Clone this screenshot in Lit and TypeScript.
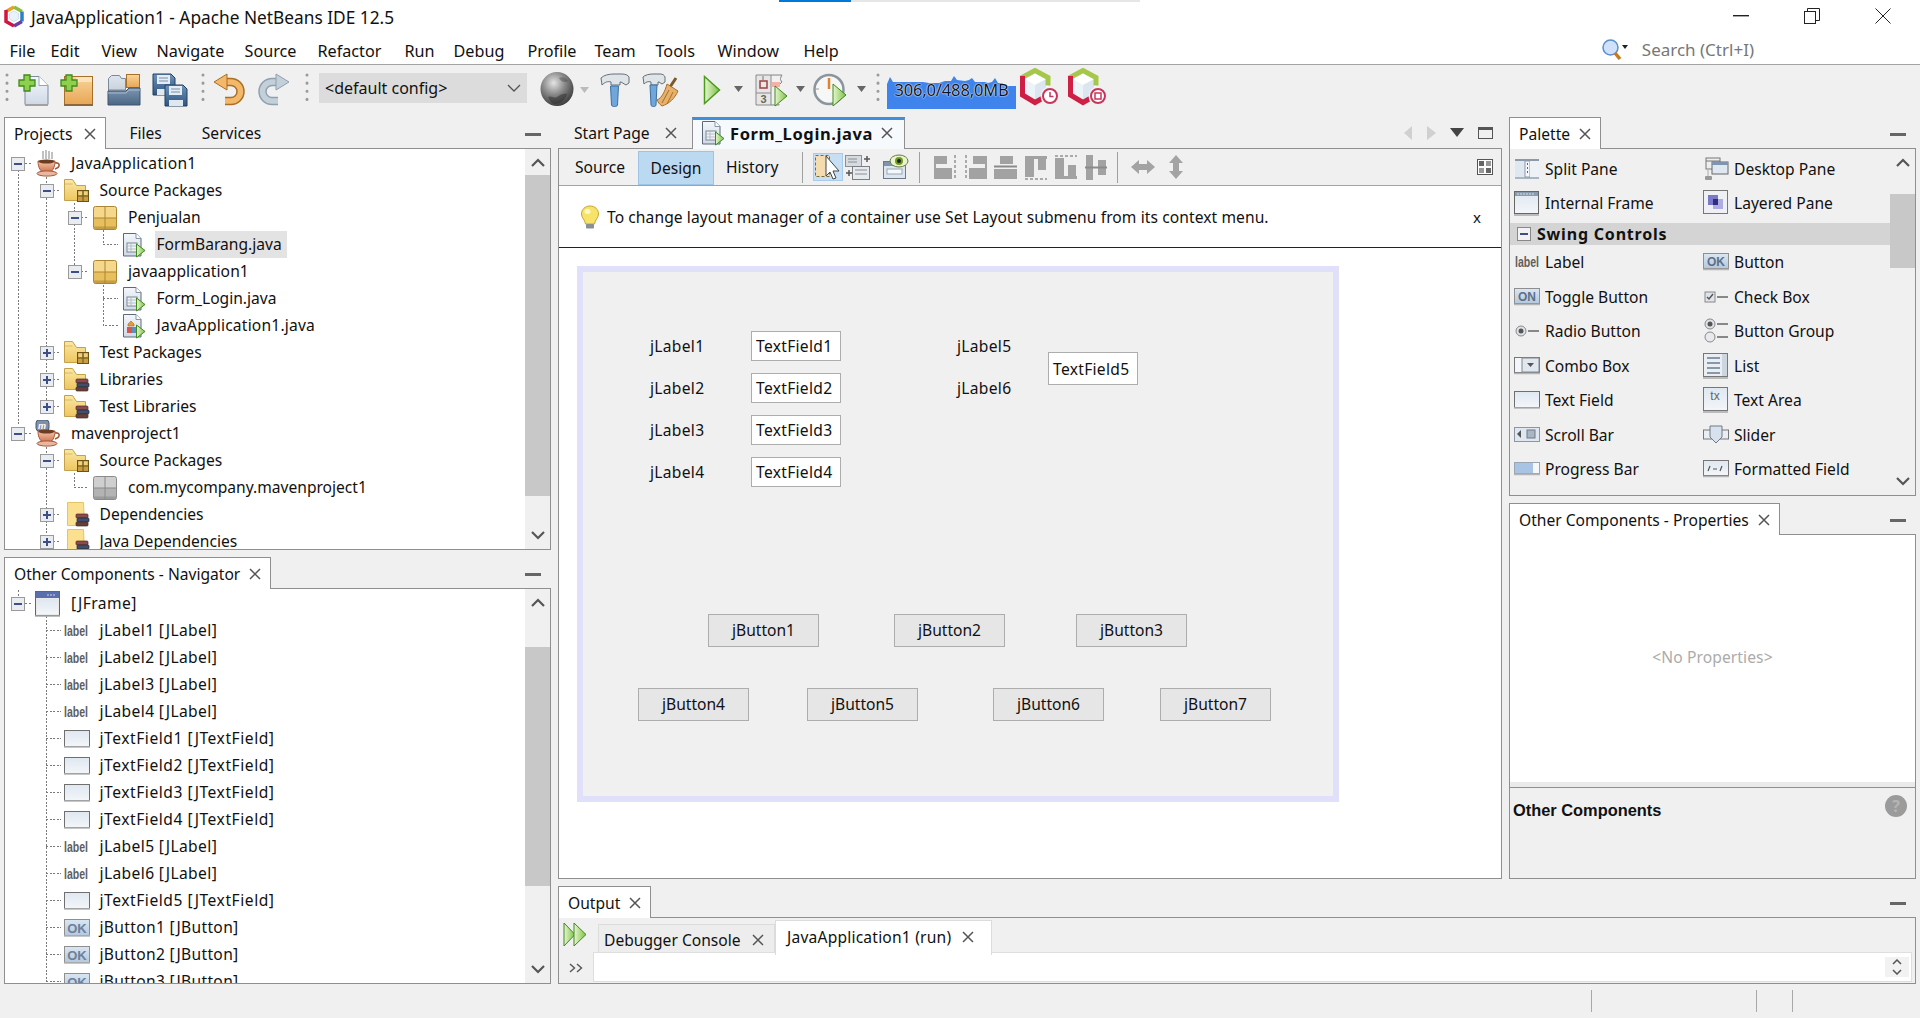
import { LitElement, html, css, svg } from "lit";
import { customElement } from "lit/decorators.js";

const I = (w: number, h: number, body: unknown) =>
  html`<svg width=${w} height=${h} viewBox="0 0 ${w} ${h}">${body}</svg>`;

const DEFS = svg`
<linearGradient id="gFold" x1="0" y1="0" x2="0" y2="1"><stop offset="0" stop-color="#fbe7a4"/><stop offset="1" stop-color="#eec65f"/></linearGradient>
<linearGradient id="gOrange" x1="0" y1="0" x2="0" y2="1"><stop offset="0" stop-color="#f9d49a"/><stop offset="1" stop-color="#e8a655"/></linearGradient>
<linearGradient id="gGreen" x1="0" y1="0" x2="1" y2="0"><stop offset="0" stop-color="#e6f5d0"/><stop offset="1" stop-color="#7cc242"/></linearGradient>
<linearGradient id="gDoc" x1="0" y1="0" x2="0" y2="1"><stop offset="0" stop-color="#f4f7fb"/><stop offset="1" stop-color="#cfd9e6"/></linearGradient>
<linearGradient id="gField" x1="0" y1="0" x2="0" y2="1"><stop offset="0" stop-color="#dfe7f0"/><stop offset="1" stop-color="#f3f6fa"/></linearGradient>
<linearGradient id="gBtn" x1="0" y1="0" x2="0" y2="1"><stop offset="0" stop-color="#dbe6f2"/><stop offset="1" stop-color="#b4c8dd"/></linearGradient>
<linearGradient id="gCup" x1="0" y1="0" x2="0" y2="1"><stop offset="0" stop-color="#f2c9ae"/><stop offset="1" stop-color="#cf6b45"/></linearGradient>
<linearGradient id="gBlue" x1="0" y1="0" x2="0" y2="1"><stop offset="0" stop-color="#6d93bd"/><stop offset="1" stop-color="#2f5580"/></linearGradient>
<linearGradient id="gGrey" x1="0" y1="0" x2="0" y2="1"><stop offset="0" stop-color="#dde4ec"/><stop offset="1" stop-color="#b8c4d0"/></linearGradient>
<linearGradient id="gFront" x1="0" y1="0" x2="0" y2="1"><stop offset="0" stop-color="#7d97b2"/><stop offset="1" stop-color="#4a6784"/></linearGradient>
<radialGradient id="gGlobe" cx="0.4" cy="0.32" r="0.72"><stop offset="0" stop-color="#e4e4e4"/><stop offset="0.5" stop-color="#858585"/><stop offset="1" stop-color="#383838"/></radialGradient>
`;

/* ---------- tree icons ---------- */
const cup = (maven = false) => I(30, 27, svg`
  ${maven
    ? svg`<rect x="3" y="0" width="13" height="11" rx="3" fill="#7f8fa8" stroke="#4d5a70"/><text x="5" y="9" font-family="Liberation Sans" font-size="9" font-weight="700" font-style="italic" fill="#fff">m</text>`
    : svg`<path d="M10 1v8M13 0v9M16 1v8M19 2v7" stroke="#999" stroke-width="1.2"/>`}
  <path d="M5 11h17c0 7-3 12-8.500 12S5 18 5 11z" fill="url(#gCup)" stroke="#a5583a"/>
  <path d="M22 13c5-1 6 4 0 6" fill="none" stroke="#a5583a" stroke-width="1.6"/>
  <ellipse cx="14" cy="23.500" rx="10" ry="2.600" fill="#e9b79f" stroke="#a5583a"/>
  <ellipse cx="13.500" cy="11.500" rx="8" ry="2" fill="#6b3d22"/>`);

const pkgSmall = svg`<rect x="13.500" y="12.500" width="11" height="11" fill="#c99f45" stroke="#6d5416"/><path d="M19 12.500v11M13.500 18h11" stroke="#6d5416"/><rect x="14.500" y="13.500" width="3.500" height="3.500" fill="#ecd283"/><rect x="20" y="13.500" width="3.500" height="3.500" fill="#ecd283"/>`;
const books = svg`<rect x="12" y="12" width="12" height="4" rx="1" fill="#8d4a4a" stroke="#4d2a2a" stroke-width=".7"/><rect x="13" y="16" width="12" height="4" rx="1" fill="#3e4f6d" stroke="#1f2a40" stroke-width=".7"/><rect x="12" y="20" width="12" height="4" rx="1" fill="#6b3b3b" stroke="#332" stroke-width=".7"/>`;
const folder = (inner: unknown) => I(26, 25, svg`<path d="M.5 1.500h8l4 6h9v15H.5z" fill="url(#gFold)" stroke="#c4a24c"/><path d="M.5 6h8" stroke="#c4a24c" stroke-width=".6"/>${inner}`);
const plainDep = () => I(26, 25, svg`<path d="M3.500.5h16l1 23H3.500z" fill="#fbe08f" stroke="#e2c568"/>${books}`);
const pkgIc = (gray = false) => {
  const f = gray ? "#cfcfcf" : "#f5d88c", d = gray ? "#8a8a8a" : "#ab8734", m = gray ? "#b3b3b3" : "#e8bf5d";
  return I(24, 24, svg`<rect x=".5" y=".5" width="23" height="23" rx="2" fill=${f} stroke=${d}/><rect x="1" y="12" width="22" height="11" fill=${m}/><path d="M12 .5v23M.5 12h23" stroke=${d}/><rect x="1" y="20.500" width="22" height="3" fill=${d} opacity=".6"/>`);
};
const tri = svg`<path d="M14.500 12 23 18.500 14.500 25z" fill="url(#gGreen)" stroke="#3f8a1c"/>`;
const formFile = () => I(24, 26, svg`<path d="M1.500 1.500H14l5 5v17.500H1.500z" fill="url(#gDoc)" stroke="#5c6a78"/><path d="M14 1.500v5h5" fill="#fff" stroke="#8796a5"/><rect x="5" y="11" width="10" height="9" fill="#eef2f6" stroke="#7a8794"/><path d="M5 14h10M5 17h10M9 11v9" stroke="#a9b4c0" stroke-width=".8"/>${tri}`);
const javaFile = () => I(24, 26, svg`<path d="M1.500 1.500H14l5 5v17.500H1.500z" fill="url(#gDoc)" stroke="#5c6a78"/><path d="M14 1.500v5h5" fill="#fff" stroke="#8796a5"/><path d="M9 8l3 3v2H6v-2z" fill="#e59a3a" stroke="#a86a1c" stroke-width=".6"/><rect x="5" y="14" width="5" height="6" fill="#d9534f"/><rect x="10" y="14" width="4" height="6" fill="#5b8fc7"/>${tri}`);
const labelIc = () => I(25, 18, svg`<text x="0" y="14" font-family="Liberation Sans" font-size="15" font-weight="700" textLength="24" lengthAdjust="spacingAndGlyphs" fill="#5e5e5e">label</text>`);
const tfIc = () => I(26, 18, svg`<rect x=".5" y=".5" width="25" height="16" fill="url(#gField)" stroke="#6f6f6f"/><path d="M0 17h26" stroke="#b5b5b5" stroke-width="1.500"/>`);
const okIc = () => I(26, 18, svg`<rect x=".5" y=".5" width="25" height="16" fill="url(#gBtn)" stroke="#8f8f8f"/><text x="13" y="13.500" text-anchor="middle" font-family="Liberation Sans" font-size="13" font-weight="700" fill="#6d8099">OK</text><path d="M0 17h26" stroke="#b5b5b5" stroke-width="1.500"/>`);
const frameIc = () => I(26, 26, svg`<rect x=".5" y=".5" width="24" height="24" fill="#eaeaea" stroke="#666"/><rect x="1" y="1" width="23" height="6" fill="#5a6fae"/><path d="M12 4h2M15 4h2M18 4h2" stroke="#cfd6ee"/><rect x="2" y="8" width="21" height="15" fill="url(#gField)"/><path d="M0 25h25" stroke="#aaa" stroke-width="1.500"/>`);

/* ---------- toolbar icons ---------- */
const plus = svg`<path d="M6 1h6v5h5v6h-5v5H6v-5H1V6h5z" fill="#8ed04e" stroke="#3f8a1c" stroke-width="1.300"/>`;
const newFile = () => I(32, 32, svg`<path d="M7 2.500h14l9 9v19H7z" fill="url(#gDoc)" stroke="#7b8b9b"/><path d="M21 2.500v9h9" fill="#fff" stroke="#98a6b3"/><path d="M7 31h23" stroke="#a1a1a1" stroke-width="2"/>${plus}`);
const newProj = () => I(34, 32, svg`<rect x="4.500" y="2.500" width="28" height="28" fill="url(#gOrange)" stroke="#a5702a"/><path d="M4 31h29" stroke="#8a6a3a" stroke-width="2"/><path d="M16 3h16v5H16z" fill="#fbe4bd"/>${plus}`);
const openProj = () => I(34, 33, svg`<path d="M1.500 31V5.500l3-3h8l2 3h4V17h-17z" fill="url(#gGrey)" stroke="#7a8a9a"/><rect x="19.500" y="1.500" width="13" height="13" fill="url(#gOrange)" stroke="#a5702a"/><path d="M1 32V18h18l3-3h11v17z" fill="url(#gFront)" stroke="#3d5570"/><path d="M1 20h18l3-3h11" stroke="#a8bacb" fill="none"/>`);
const floppy = (x: number, y: number) => svg`<path d="M${x} ${y}h18l4 4v17H${x}z" fill="url(#gBlue)" stroke="#21405f"/><rect x=${x + 4} y=${y + 1} width="13" height="9" fill="#e4ecf5"/><path d="M${x + 6} ${y + 4}h9M${x + 6} ${y + 7}h9" stroke="#7a8ea3"/><rect x=${x + 4} y=${y + 15} width="14" height="6" fill="#dfe7f0"/>`;
const saveAll = () => I(36, 34, svg`${floppy(1, 1)}${floppy(13, 12)}`);
const undo = () => I(34, 36, svg`<path d="M11 11h8a9.500 9.500 0 0 1 0 19h-6" fill="none" stroke="#a96f26" stroke-width="8.500"/><path d="M11 11h8a9.500 9.500 0 0 1 0 19h-6" fill="none" stroke="#f3b869" stroke-width="5.500"/><path d="M15 3 2 11l13 8z" fill="#f3b869" stroke="#a96f26"/>`);
const redo = () => I(34, 36, svg`<path d="M23 11h-8a9.500 9.500 0 0 0 0 19h6" fill="none" stroke="#8fa0ae" stroke-width="8.500"/><path d="M23 11h-8a9.500 9.500 0 0 0 0 19h6" fill="none" stroke="#c3d0da" stroke-width="5.500"/><path d="M19 3l13 8-13 8z" fill="#c3d0da" stroke="#8fa0ae"/>`);
const globe = () => I(34, 36, svg`<ellipse cx="17" cy="18" rx="16.500" ry="17" fill="url(#gGlobe)"/><path d="M8 26c4-2 6 2 9 0s6-4 10-3c-2 6-6 10-12 10-3 0-5-3-7-7z" fill="#2c2c2c" opacity=".5"/><path d="M19 7c3-2 7 0 9 3-3 2-7 1-9-3z" fill="#444" opacity=".4"/>`);
const arrowD = () => I(10, 6, svg`<path d="M0 0h9l-4.500 6z" fill="#666"/>`);
const hammer = () => I(30, 36, svg`<path d="M1 6c3-3 8-4 13-4h8c3 0 6 1 7 3v6l-3 2-5-3h-1v3h-9v-3C8 9 5 10 2 13z" fill="#dfe4e8" stroke="#666f78"/><path d="M10.500 14h8l-1 19c0 2-6 2-6 0z" fill="#6fa7dc" stroke="#3d6f9e"/>`);
const cleanB = () => I(40, 36, svg`<path d="M1 5c2-2 6-3 10-3h7c3 0 4 1 5 3v5l-3 2-3-2h-1v3h-7v-3C6 9 4 10 2 12z" fill="#dfe4e8" stroke="#666f78"/><path d="M8 13h7l-1 20c0 2-5 2-5 0z" fill="#6fa7dc" stroke="#3d6f9e"/><path d="M34 6l-6 9" stroke="#7a5a2a" stroke-width="3"/><path d="M25 12l11 7c-3 7-9 13-16 15-3-2-4-4-5-6 5-2 8-9 10-16z" fill="#e8b06a" stroke="#a5702a"/><path d="M27 18l-7 13M31 20l-6 12" stroke="#a5702a"/>`);
const runIc = () => I(18, 30, svg`<path d="M1.500 1.500 16.500 15 1.500 28.500z" fill="url(#gGreen)" stroke="#4c9a1e" stroke-width="1.500"/>`);
const debugIc = () => I(34, 34, svg`<path d="M1 2h26l-2 4 2 3-3 3v20H1z" fill="#e6e6e6" stroke="#8a8a8a"/><rect x="16" y="3" width="9" height="28" fill="#f1f1f1"/><path d="M16 2v30M1 20h15" stroke="#8a8a8a"/><rect x="17" y="9" width="8" height="5" fill="#f7b0a8"/><path d="M8 3v4" stroke="#777"/><rect x="5" y="8" width="7" height="7" fill="#e8e8e8" stroke="#a04040" stroke-width="1.500"/><text x="8.500" y="30" text-anchor="middle" font-family="Liberation Sans" font-size="11" font-weight="700" fill="#665">3</text><path d="M20 13l12 10-12 10z" fill="url(#gGreen)" stroke="#3f8a1c"/>`);
const profIc = () => I(36, 34, svg`<circle cx="16" cy="16.500" r="14.500" fill="#f7f7f7" stroke="#8b959e" stroke-width="2.500"/><path d="M16 5v11" stroke="#e0822f" stroke-width="2.500"/><path d="M3 16h3" stroke="#999"/><path d="M20 11l13 11-13 11z" fill="url(#gGreen)" stroke="#3f8a1c"/>`);
const nbHex = (badge: unknown) => I(40, 39, svg`
  <path d="M15 4 3 10v17l12 7 13-7V10z" fill="#fff"/>
  <path d="M15 17 5 11v15l10 6z" fill="#eef3f8"/><path d="M15 17l11-6v15l-11 6z" fill="#dbe6f0"/>
  <path d="M2 12V9.500L15 2.500l13 7v8" stroke="#a6c84a" stroke-width="5" fill="none"/>
  <path d="M2.500 8v19L15 34.500l7-4" stroke="#cf1f45" stroke-width="5" fill="none"/>
  <circle cx="30" cy="28" r="9.500" fill="#f0f0f0"/>${badge}`);
const nbClock = () => nbHex(svg`<circle cx="30" cy="28" r="7" fill="#fff" stroke="#c8355c" stroke-width="2"/><path d="M30 24v4.500h3.500" fill="none" stroke="#c8355c" stroke-width="1.500"/>`);
const nbStop = () => nbHex(svg`<circle cx="30" cy="28" r="7" fill="#fff" stroke="#c8355c" stroke-width="2"/><rect x="27" y="25" width="6" height="6" fill="#fff" stroke="#c8355c" stroke-width="1.500"/>`);
const logo = () => I(22, 26, svg`
  <path d="M11 3 3 7.500" stroke="#e8a020" stroke-width="3.500" fill="none"/>
  <path d="M11 3 19 7.500" stroke="#8cbf3f" stroke-width="3.500" fill="none"/>
  <path d="M19 7.500v10" stroke="#2f7fc8" stroke-width="3.500" fill="none"/>
  <path d="M3 6v11.500L11 22" stroke="#d3143e" stroke-width="3.500" fill="none"/>
  <path d="M11 22l8-4.500" stroke="#6a3fa0" stroke-width="3.500" fill="none"/>
  <path d="M11 7 6.500 9.500v5.500l4.500 2.500 4.500-2.500V9.500z" fill="#e9f2fa" stroke="#cfe0ee"/>`);
const searchIc = () => I(26, 22, svg`<circle cx="8.500" cy="8.500" r="7.500" fill="#cfe2fa" stroke="#5a8fd0" stroke-width="1.500"/><path d="M13 14l5 6" stroke="#c9791c" stroke-width="3.500"/><path d="M20 6h6l-3 4z" fill="#222"/>`);
const xMark = () => I(12, 12, svg`<path d="M1 1l10 10M11 1 1 11" stroke="#555" stroke-width="1.500"/>`);
const minBar = () => I(16, 3, svg`<rect width="16" height="3" fill="#666"/>`);
const chev = (up: boolean) => I(14, 9, svg`<path d=${up ? "M1 8l6-6 6 6" : "M1 1l6 6 6-6"} fill="none" stroke="#555" stroke-width="2.200"/>`);
const bulb = () => I(20, 24, svg`<path d="M10 1c5 0 8.500 3.500 8.500 8 0 4-3.500 5.500-4 10h-9c-.5-4.500-4-6-4-10 0-4.500 3.500-8 8.500-8z" fill="#f7e36a" stroke="#c9a52a"/><ellipse cx="7.500" cy="6.500" rx="3" ry="2.500" fill="#fff8c9"/><rect x="6" y="19" width="8" height="4.500" rx="1" fill="#8a8f94"/>`);
const greenDouble = () => I(24, 25, svg`<path d="M1 1l11 11.500L1 24z" fill="url(#gGreen)" stroke="#3f8a1c"/><path d="M11 1l12 11.500L11 24z" fill="url(#gGreen)" stroke="#3f8a1c"/>`);

/* sub toolbar */
const selIc = () => I(28, 26, svg`<rect x="1.500" y="1.500" width="14" height="21" fill="#f5dcae" stroke="#7d6a3a" stroke-dasharray="3 2"/><path d="M12 2v20l4-4 3 7 3-1-3-7h6z" fill="#fff" stroke="#444"/>`);
const connIc = () => I(26, 25, svg`<rect x=".5" y=".5" width="16" height="11" fill="#d6dbe2" stroke="#8a8f96"/><path d="M3 4h9M3 7h9" stroke="#8a8f96"/><rect x="7.500" y="11.500" width="17" height="13" fill="#e6e9ed" stroke="#7a7f86"/><path d="M10 15h12M10 19h12" stroke="#8a8f96"/><path d="M19 4h6M22 1v6" stroke="#555" stroke-width="1.500"/><path d="M1 18h6M4 15v6" stroke="#555" stroke-width="1.500"/>`);
const prevIc = () => I(26, 26, svg`<rect x=".5" y="7.500" width="22" height="17" fill="#dbe6f0" stroke="#6f7a86"/><rect x="1" y="8" width="21" height="4" fill="#7f95ad"/><rect x="4" y="15" width="15" height="5" fill="#f5f7fa" stroke="#9aa5b1"/><ellipse cx="16" cy="7" rx="9" ry="6" fill="#e8f3d0" stroke="#6b7a3a"/><circle cx="16" cy="7" r="4" fill="#6f9a23"/><circle cx="16" cy="7" r="2" fill="#222"/>`);
const G = "#a2a2a2";
const alignSet = [
  svg`<rect x="0" y="1" width="13" height="8" fill=${G}/><rect x="0" y="13" width="18" height="11" fill=${G}/><rect x="0" y="1" width="2" height="23" fill=${G}/><path d="M21 0v25" stroke="#aaa" stroke-dasharray="3 2" stroke-width="2"/>`,
  svg`<rect x="9" y="1" width="14" height="8" fill=${G}/><rect x="5" y="13" width="18" height="11" fill=${G}/><rect x="21" y="1" width="2" height="23" fill=${G}/><path d="M2 0v25" stroke="#aaa" stroke-dasharray="3 2" stroke-width="2"/>`,
  svg`<rect x="6" y="1" width="13" height="8" fill=${G}/><rect x="0" y="14" width="23" height="10" fill=${G}/><path d="M0 11.500h23" stroke="#8a8a8a" stroke-width="2"/>`,
  svg`<rect x="0" y="1" width="9" height="21" fill=${G}/><rect x="13" y="1" width="8" height="14" fill=${G}/><rect x="0" y="1" width="22" height="3" fill=${G}/><path d="M0 24h22" stroke="#aaa" stroke-dasharray="3 2" stroke-width="2"/>`,
  svg`<rect x="0" y="3" width="9" height="21" fill=${G}/><rect x="13" y="10" width="8" height="14" fill=${G}/><rect x="0" y="21" width="22" height="3" fill=${G}/><path d="M0 1h22" stroke="#aaa" stroke-dasharray="3 2" stroke-width="2"/>`,
  svg`<rect x="1" y="0" width="7" height="25" fill=${G}/><rect x="13" y="5" width="8" height="15" fill=${G}/><path d="M0 12.500h22" stroke="#8a8a8a" stroke-width="2"/>`,
];
const alignIc = (i: number) => I(23, 25, alignSet[i]);
const hResize = () => I(26, 20, svg`<path d="M1 10l8-7v4h8V3l8 7-8 7v-4H9v4z" fill="#a3a3a3"/>`);
const vResize = () => I(16, 26, svg`<path d="M8 1l7 8h-4v8h4l-7 8-7-8h4V9H1z" fill="#a3a3a3"/>`);
const gridIc = () => I(16, 16, svg`<rect x=".5" y=".5" width="15" height="15" fill="#fff" stroke="#555"/><rect x="2" y="2" width="5" height="5" fill="#666"/><rect x="9" y="9" width="5" height="5" fill="#666"/><rect x="9" y="2" width="5" height="5" fill="#999"/><rect x="2" y="9" width="5" height="5" fill="#999"/>`);

/* palette icons */
const P = (b: unknown) => I(26, 26, b);
const pal: Record<string, () => unknown> = {
  split: () => P(svg`<rect x="1" y="3" width="24" height="20" fill="#dfe7f0"/><rect x="1" y="3" width="24" height="2" fill="#8a9aab"/><rect x="1" y="21" width="24" height="2" fill="#a9b6c4"/><rect x="11" y="5" width="5" height="16" fill="#f5f7fa" stroke="#8a9aab"/><path d="M13.500 7v12" stroke="#5a6a7a" stroke-dasharray="2 2"/><path d="M16 5h9v16h-9z" fill="#eef2f6"/>`),
  desktop: () => P(svg`<rect x="3" y="2" width="14" height="11" fill="#eee" stroke="#777"/><path d="M3 5h14" stroke="#777"/><rect x="9" y="6" width="16" height="12" fill="#dfe8f2" stroke="#666"/><rect x="9" y="6" width="16" height="3" fill="#7f95ad"/><rect x="2" y="20" width="7" height="4" rx="1" fill="#999"/><path d="M5 14v6" stroke="#aaa"/>`),
  iframe: () => P(svg`<rect x=".5" y="1.500" width="24" height="22" fill="url(#gField)" stroke="#666"/><rect x="1" y="2" width="23" height="4" fill="#8a9ab0"/><path d="M3 4h18" stroke="#ddd" stroke-dasharray="2 1"/><path d="M0 25h25" stroke="#aaa" stroke-width="1.500"/>`),
  layered: () => P(svg`<rect x=".5" y=".5" width="24" height="23" fill="#eef0f6" stroke="#777"/><rect x="5" y="5" width="10" height="10" fill="#7a78c8"/><rect x="10" y="9" width="10" height="10" fill="#9d9bdb" opacity=".8"/><rect x="10" y="9" width="5" height="6" fill="#2f2d80"/>`),
  label: () => labelIc(),
  button: () => I(26, 18, svg`<rect x=".5" y=".5" width="25" height="15" fill="url(#gBtn)" stroke="#8f8f8f"/><text x="13" y="13" text-anchor="middle" font-family="Liberation Sans" font-size="12" font-weight="700" fill="#5d7089">OK</text><path d="M0 16.500h26" stroke="#b5b5b5" stroke-width="1.500"/>`),
  toggle: () => I(26, 18, svg`<rect x=".5" y=".5" width="25" height="15" fill="url(#gBtn)" stroke="#8f8f8f"/><text x="13" y="13" text-anchor="middle" font-family="Liberation Sans" font-size="12" font-weight="700" fill="#5d7089">ON</text><path d="M0 16.500h26" stroke="#b5b5b5" stroke-width="1.500"/>`),
  check: () => I(26, 14, svg`<rect x="2" y="2" width="10" height="10" fill="#dfe4ea" stroke="#888"/><path d="M4 7l2 2 4-5" fill="none" stroke="#555" stroke-width="1.500"/><path d="M14 7h11" stroke="#888" stroke-width="2"/>`),
  radio: () => I(26, 14, svg`<circle cx="7" cy="7" r="5" fill="#dfe4ea" stroke="#888"/><circle cx="7" cy="7" r="2.500" fill="#555"/><path d="M14 7h11" stroke="#888" stroke-width="2"/>`),
  group: () => I(26, 26, svg`<circle cx="7" cy="6" r="5" fill="#dfe4ea" stroke="#888"/><circle cx="7" cy="6" r="2.500" fill="#555"/><circle cx="7" cy="19" r="5" fill="#e8eaee" stroke="#888"/><path d="M14 6h11M14 19h11" stroke="#888" stroke-width="2"/>`),
  combo: () => I(26, 18, svg`<rect x=".5" y=".5" width="25" height="15" fill="#f3f6fa" stroke="#777"/><rect x="8" y="1" width="17" height="14" fill="#dfe7f0" stroke="#888"/><path d="M13 6h7l-3.500 4z" fill="#555"/><path d="M0 16.500h26" stroke="#b5b5b5" stroke-width="1.500"/>`),
  list: () => I(26, 26, svg`<rect x=".5" y=".5" width="24" height="23" fill="#e9eef4" stroke="#777"/><rect x="19" y="1" width="5" height="22" fill="#cdd5de"/><path d="M4 5h13M4 10h13M4 15h13M4 20h13" stroke="#8a97a6" stroke-width="2"/><path d="M0 25h25" stroke="#aaa" stroke-width="1.500"/>`),
  textf: () => tfIc(),
  texta: () => I(26, 26, svg`<rect x=".5" y=".5" width="24" height="23" fill="url(#gField)" stroke="#777"/><text x="12" y="13" text-anchor="middle" font-family="Liberation Sans" font-size="12" fill="#666">tx</text><path d="M0 25h25" stroke="#aaa" stroke-width="1.500"/>`),
  scroll: () => I(26, 16, svg`<rect x=".5" y=".5" width="25" height="14" fill="#dfe7f0" stroke="#8a97a6"/><path d="M7 3v8l-4-4z" fill="#555"/><rect x="13" y="3" width="8" height="8" fill="#aab6c3" stroke="#6f7a86"/>`),
  slider: () => I(26, 20, svg`<rect x=".5" y="5" width="25" height="9" fill="#e9eef4" stroke="#777"/><path d="M7 1h12v11l-6 6-6-6z" fill="#d8e2ee" stroke="#6f7a86"/>`),
  progress: () => I(26, 14, svg`<rect x=".5" y=".5" width="25" height="11" fill="#f5f7fa" stroke="#9aa5b1"/><rect x="1" y="1" width="18" height="10" fill="#a8c4e4"/><path d="M0 12.500h26" stroke="#b5b5b5" stroke-width="1.500"/>`),
  formatted: () => I(26, 18, svg`<rect x=".5" y=".5" width="25" height="15" fill="url(#gField)" stroke="#777"/><path d="M5 11l2-5M10 9h4M17 11l2-5" stroke="#555" stroke-width="1.200"/><path d="M0 16.500h26" stroke="#b5b5b5" stroke-width="1.500"/>`),
};

/* data */
type Row = { d: number; e?: "-" | "+"; i: () => unknown; t: string; sel?: boolean; ls?: number };
const F1 = () => folder(pkgSmall), F2 = () => folder(books);
const projects: Row[] = [
  { d: 0, e: "-", i: () => cup(), t: "JavaApplication1", ls: 0.3 },
  { d: 1, e: "-", i: F1, t: "Source Packages" },
  { d: 2, e: "-", i: () => pkgIc(), t: "Penjualan" },
  { d: 3, i: formFile, t: "FormBarang.java", sel: true },
  { d: 2, e: "-", i: () => pkgIc(), t: "javaapplication1", ls: 0.1 },
  { d: 3, i: formFile, t: "Form_Login.java" },
  { d: 3, i: javaFile, t: "JavaApplication1.java", ls: 0.2 },
  { d: 1, e: "+", i: F1, t: "Test Packages" },
  { d: 1, e: "+", i: F2, t: "Libraries" },
  { d: 1, e: "+", i: F2, t: "Test Libraries" },
  { d: 0, e: "-", i: () => cup(true), t: "mavenproject1" },
  { d: 1, e: "-", i: F1, t: "Source Packages" },
  { d: 2, i: () => pkgIc(true), t: "com.mycompany.mavenproject1" },
  { d: 1, e: "+", i: plainDep, t: "Dependencies" },
  { d: 1, e: "+", i: plainDep, t: "Java Dependencies" },
];
const n = (t: string, i: () => unknown, ls: number): Row => ({ d: 1, i, t, ls });
const lab = (k: number) => n(`jLabel${k} [JLabel]`, labelIc, 0.38);
const fld = (k: number) => n(`jTextField${k} [JTextField]`, tfIc, 0.55);
const btn = (k: number) => n(`jButton${k} [JButton]`, okIc, 0.33);
const navigator: Row[] = [
  { d: 0, e: "-", i: frameIc, t: "[JFrame]", ls: 0.45 },
  lab(1), lab(2), lab(3), lab(4), fld(1), fld(2), fld(3), fld(4), lab(5), lab(6), fld(5), btn(1), btn(2), btn(3),
];
const palTop = [["split", "Split Pane"], ["desktop", "Desktop Pane"], ["iframe", "Internal Frame"], ["layered", "Layered Pane"]];
const palSwing = [["label", "Label"], ["button", "Button"], ["toggle", "Toggle Button"], ["check", "Check Box"], ["radio", "Radio Button"], ["group", "Button Group"], ["combo", "Combo Box"], ["list", "List"], ["textf", "Text Field"], ["texta", "Text Area"], ["scroll", "Scroll Bar"], ["slider", "Slider"], ["progress", "Progress Bar"], ["formatted", "Formatted Field"]];
const menus: [string, number][] = [["File", 41], ["Edit", 51], ["View", 55], ["Navigate", 88], ["Source", 73], ["Refactor", 87], ["Run", 49], ["Debug", 74], ["Profile", 67], ["Team", 61], ["Tools", 62], ["Window", 86], ["Help", 50]];

const formOrigin = [583, 272];
const fLabels: [string, number, number][] = [["jLabel1", 650, 346], ["jLabel2", 650, 388], ["jLabel3", 650, 430], ["jLabel4", 650, 472], ["jLabel5", 957, 346], ["jLabel6", 957, 388]];
const fFields: [string, number, number, number, number][] = [["TextField1", 751, 331, 90, 30], ["TextField2", 751, 373, 90, 30], ["TextField3", 751, 415, 90, 30], ["TextField4", 751, 457, 90, 30], ["TextField5", 1048, 352, 90, 33]];
const fButtons: [string, number, number][] = [["jButton1", 708, 614], ["jButton2", 894, 614], ["jButton3", 1076, 614], ["jButton4", 638, 688], ["jButton5", 807, 688], ["jButton6", 993, 688], ["jButton7", 1160, 688]];

const handle = () => I(4, 30, svg`<path d="M2 2v27" stroke="#9a9a9a" stroke-width="3" stroke-linecap="round" stroke-dasharray="0.1 8"/>`);
const guideP = (d: string) => svg`<path d=${d} fill="none" stroke="#7a7a7a" stroke-dasharray="2 1.500" shape-rendering="crispEdges"/>`;

@customElement("app-root")
export class AppRoot extends LitElement {
  static styles = css`
    :host { display: flex; flex-direction: column; width: 1920px; height: 1018px; overflow: hidden; position: relative;
      background: #f0f0f0; color: #111; font-family: "Noto Sans", "Liberation Sans", sans-serif; font-size: 15.6px; }
    svg { display: block; flex: none; }
    .defs { position: absolute; width: 0; height: 0; }
    .loadbar { position: absolute; left: 779px; top: 0; width: 361px; height: 2px; background: #e6e6e6; }
    .loadbar i { display: block; width: 72px; height: 2px; background: #0078d7; }
    .title { height: 40px; background: #fff; display: flex; align-items: center; flex: none; }
    .title .logo { margin-left: 3px; margin-right: 6px; margin-top: -6px; }
    .title .name { font-size: 17.3px; flex: 1; margin-top: -6px; }
    .win { width: 16px; margin-right: 55px; margin-top: -9px; display: flex; justify-content: center; }
    .win.last { margin-right: 29px; }
    .menu { height: 22px; padding-bottom: 2px; background: #fff; border-bottom: 1px solid #a3a3a3; display: flex; flex: none; align-items: center; padding-left: 9.5px; font-size: 16.2px; position: relative; }
    .menu span { flex: none; }
    .menu .grow { flex: 1; }
    .search { display: flex; align-items: center; color: #777; margin-right: 166px; margin-top: -3px; gap: 14px; font-size: 17px; }
    .toolbar { height: 52px; flex: none; display: flex; align-items: flex-start; }
    .combo { width: 208px; height: 30px; background: #dcdcdc; box-sizing: border-box; display: flex; align-items: center; padding: 0 6px; justify-content: space-between; font-size: 16px; }
    .mem { width: 129px; height: 34px; position: relative; display: flex; align-items: center; justify-content: center; font-size: 16.4px; letter-spacing: -.1px; text-shadow: 0 0 1.5px #fff, 0 0 1.5px #fff; color: #0c1424; }
    .mem svg { position: absolute; inset: 0; }
    .mem span { position: relative; margin-top: -6px; }
    .main { flex: 1; display: flex; padding: 0 4px; gap: 7px; min-height: 0; }
    .left { width: 547px; display: flex; flex-direction: column; gap: 7px; flex: none; }
    .right-wrap { flex: 1; display: flex; flex-direction: column; gap: 7px; min-width: 0; }
    .upper { height: 762px; display: flex; gap: 7px; flex: none; }
    .panel { display: flex; flex-direction: column; min-height: 0; }
    .tabs { height: 31px; flex: none; display: flex; align-items: stretch; position: relative; }
    .tab { display: flex; align-items: center; box-sizing: border-box; }
    .tab.on { background: #fff; border: 1px solid #8f8f8f; border-bottom: none; height: 32px; position: relative; z-index: 2; padding-left: 9px; gap: 9px; padding-right: 9px; }
    .tab.on.wide { gap: 12px; }
    .tab.off { padding-left: 23px; padding-right: 17px; }
    .tabs .end { margin-left: auto; align-self: center; margin-right: 10px; margin-top: 3px; }
    .body { flex: 1; min-height: 0; border: 1px solid #8f8f8f; background: #fff; display: flex; overflow: hidden; position: relative; }
    .h-proj { height: 433px; flex: none; }
    .h-nav { flex: 1; }
    .tree { flex: 1; position: relative; overflow: hidden; min-width: 0; padding-top: 1px; }
    .tree > svg.guides { position: absolute; left: 0; top: 0; }
    .row { height: 27px; display: flex; align-items: center; position: relative; white-space: nowrap; }
    .exp { width: 14px; height: 14px; flex: none; position: relative; z-index: 1; }
    .slot { width: 46px; flex: none; display: flex; justify-content: center; position: relative; z-index: 1; }
    .txt { padding: 0 5px 0 2px; margin-left: -2px; line-height: 27px; position: relative; z-index: 1; }
    .txt.sel { background: #e3e3e3; }
    .sb { width: 25px; flex: none; background: #f0f0f0; display: flex; flex-direction: column; }
    .sb .arr { height: 27px; display: flex; align-items: center; justify-content: center; flex: none; }
    .sb .thumb { background: #c8c8c8; flex: none; }
    .sb .sp { flex: 1; }
    .editor { width: 944px; flex: none; }
    .etab { display: flex; align-items: center; box-sizing: border-box; }
    .etab.start { width: 134px; padding-left: 16px; gap: 15px; }
    .etab.act { width: 213px; height: 32px; background: #f7fafd; border: 1px solid #8f8f8f; border-top: 3px solid #3d8fdc; border-bottom: none; padding: 0 0 3px 8px; gap: 5px; position: relative; z-index: 2; }
    .etab.act b { font-size: 16.5px; letter-spacing: .6px; font-weight: 700; margin-right: 3px; }
    .ctrls { margin-left: auto; display: flex; align-items: center; margin-right: 9px; gap: 14px; }
    .ebody { flex: 1; border: 1px solid #8f8f8f; background: #fff; display: flex; flex-direction: column; min-height: 0; overflow: hidden; }
    .sub { height: 37px; box-sizing: border-box; flex: none; background: #f0f0f0; border-bottom: 1px solid #a3a3a3; display: flex; align-items: center; position: relative; }
    .vtab { height: 100%; display: flex; align-items: center; box-sizing: border-box; flex: none; }
    .vtab.src { width: 79px; padding-left: 16px; }
    .vtab.des { width: 76px; justify-content: center; background: #bcd9f2; border: 1px solid #9dc3e6; height: 34px; margin-top: 1px; }
    .vtab.his { width: 88px; padding-left: 12px; }
    .vsep { width: 1px; height: 31px; background: #a0a0a0; flex: none; }
    .sel-btn { width: 30px; height: 28px; box-sizing: border-box; background: #c6dff5; border: 1px solid #a8cbea; display: flex; align-items: center; justify-content: center; }
    .info { height: 62px; box-sizing: border-box; flex: none; border-bottom: 1px solid #222; display: flex; align-items: center; padding-left: 21px; gap: 7px; }
    .info .m { flex: 1; letter-spacing: .08px; }
    .info .x { margin-right: 20px; font-size: 15px; }
    .canvas { flex: 1; padding: 18px 0 0 18px; background: #fff; }
    .form { width: 762px; height: 536px; box-sizing: border-box; border: 6px solid #e0e0fa; background: #f0f0f0; position: relative; }
    .form > * { position: absolute; box-sizing: border-box; display: flex; align-items: center; }
    .fl { line-height: 20px; letter-spacing: .3px; }
    .ff { background: #fff; border: 1px solid #adadad; padding-left: 4px; letter-spacing: .3px; }
    .fb { background: #e6e6e6; border: 1px solid #adadad; justify-content: center; width: 111px; height: 33px; padding-bottom: 1px; }
    .palette { height: 379px; flex: none; }
    .props { flex: 1; }
    .rightcol { flex: 1; display: flex; flex-direction: column; gap: 7px; min-width: 0; }
    .pal { flex: 1; background: #f0f0f0; padding-top: 2.5px; min-width: 0; }
    .pg { display: grid; grid-template-columns: 189px 1fr; grid-auto-rows: 34.5px; padding-left: 4px; }
    .pi { display: flex; align-items: center; }
    .pi .ic { width: 26px; margin-right: 5px; display: flex; justify-content: center; }
    .sec { height: 22px; margin-top: 2.5px; background: #d4d4d4; display: flex; align-items: center; padding-left: 7px; gap: 6px; font-weight: 700; font-size: 16px; letter-spacing: .8px; }
    .pb { flex-direction: column; }
    .noprop { flex: 1; display: flex; align-items: center; justify-content: center; color: #ababab; background: #fff; padding-bottom: 3px; letter-spacing: .1px; }
    .pfoot { height: 91px; flex: none; background: #f0f0f0; border-top: 5px solid #eaeaea; box-shadow: inset 0 1px 0 #8f8f8f; position: relative; padding: 0 3px; }
    .pfoot b { display: block; font-family: "Liberation Sans", sans-serif; font-size: 16.4px; margin-top: 14px; }
    .help { position: absolute; right: 8px; top: 8px; width: 22px; height: 22px; border-radius: 50%; background: #9b9b9b; color: #b5b5b5; display: flex; align-items: center; justify-content: center; font-weight: 700; font-size: 16px; }
    .output { flex: 1; }
    .obody { flex: 1; border: 1px solid #8f8f8f; background: #f0f0f0; display: flex; flex-direction: column; min-height: 0; }
    .otabs { height: 34px; flex: none; display: flex; align-items: flex-end; padding-left: 4px; }
    .otab { display: flex; align-items: center; box-sizing: border-box; }
    .otab.a { width: 177px; height: 28px; background: #ededed; border: 1px solid #dcdcdc; border-bottom: none; padding-left: 5px; padding-top: 2px; gap: 11px; margin-left: 11px; }
    .otab.b { width: 217px; height: 35px; background: #fff; border: 1px solid #dcdcdc; border-bottom: none; padding-left: 11px; gap: 11px; margin-bottom: -3px; position: relative; z-index: 2; padding-bottom: 3px; letter-spacing: .2px; }
    .oin { flex: 1; display: flex; min-height: 0; }
    .oin .pr { width: 34px; display: flex; justify-content: center; align-items: center; flex: none; }
    .oin .box { flex: 1; background: #fff; border: 1px solid #dedede; margin: 0 3px 1px 0; display: flex; justify-content: flex-end; align-items: center; padding-right: 2px; }
    .spin { width: 24px; height: 20px; background: #f2f2f2; display: flex; flex-direction: column; align-items: center; justify-content: center; gap: 4px; }
    .status { height: 34px; flex: none; display: flex; align-items: center; justify-content: flex-end; padding-right: 127px; }
    .status i { display: block; width: 1px; height: 22px; background: #a8a8a8; }
    .status .s1 { margin-right: 164px; }
    .status .s2 { margin-right: 35px; }
  `;

  private row(r: Row) {
    const exp = r.e
      ? I(14, 14, svg`<rect x=".5" y=".5" width="13" height="13" fill="#e9edf2" stroke="#9a9a9a"/><path d="M3 7h8" stroke="#3d4f86" stroke-width="2"/>${r.e === "+" ? svg`<path d="M7 3v8" stroke="#3d4f86" stroke-width="2"/>` : ""}`)
      : "";
    return html`<div class="row" style="padding-left:${6 + 28.5 * r.d}px">
      <div class="exp">${exp}</div><div class="slot">${r.i()}</div><div class="txt ${r.sel ? "sel" : ""}" style="letter-spacing:${r.ls ?? 0}px">${r.t}</div></div>`;
  }

  private sb(gap: number, h: number) {
    return html`<div class="sb"><div class="arr">${chev(true)}</div>
      <div class="thumb" style="margin-top:${gap}px;height:${h}px"></div><div class="sp"></div>
      <div class="arr">${chev(false)}</div></div>`;
  }

  private toolbar() {
    // [centre x, width, top y, content] in page pixels: computed margins keep them in flow.
    const items: [number, number, number, unknown][] = [
      [7, 4, 73, handle()], [33.5, 32, 74, newFile()], [76.5, 34, 74, newProj()], [123.5, 34, 73, openProj()], [170, 36, 73, saveAll()],
      [203, 4, 73, handle()], [229, 34, 71, undo()], [274, 34, 71, redo()], [307, 4, 73, handle()],
      [423, 208, 73, html`<div class="combo"><span>&lt;default config&gt;</span>${I(14, 8, svg`<path d="M1 1l6 6 6-6" fill="none" stroke="#555" stroke-width="1.300"/>`)}</div>`],
      [557, 34, 71, globe()], [585, 10, 87, I(10, 6, svg`<path d="M0 0h9l-4.500 6z" fill="#bbb"/>`)],
      [614.5, 30, 72, hammer()], [662, 40, 72, cleanB()], [712, 18, 75, runIc()], [739, 10, 86, arrowD()], [772, 34, 73, debugIc()], [801, 10, 86, arrowD()],
      [831, 36, 73, profIc()], [862, 10, 86, arrowD()], [878, 4, 73, handle()],
      [951.5, 129, 75, html`<div class="mem">${I(129, 34, svg`<path d="M0 34V9L3 2l3 5h30l6 1h10l6-2h6l3-5 3 4 8 1 4-1 3-2 3 4h10l3 1 4-1 3-4 3 5h4l5 3h9v24z" fill="#3f83ec"/>`)}<span>306,0/488,0MB</span></div>`],
      [1040, 40, 68, nbClock()], [1088, 40, 68, nbStop()],
    ];
    let cur = 0;
    return items.map(([c, w, top, t]) => {
      const ml = c - w / 2 - cur;
      cur = c + w / 2;
      return html`<div style="margin-left:${ml}px;margin-top:${top - 65}px;flex:none">${t}</div>`;
    });
  }

  private subbar() {
    const items: [number, number, unknown][] = [
      [828, 30, html`<div class="sel-btn">${selIc()}</div>`], [858, 26, connIc()], [896, 26, prevIc()],
      [919, 1, html`<div class="vsep"></div>`],
      [945.5, 23, alignIc(0)], [975.5, 23, alignIc(1)], [1005.5, 23, alignIc(2)], [1036, 23, alignIc(3)], [1066, 23, alignIc(4)], [1096, 23, alignIc(5)],
      [1117, 1, html`<div class="vsep"></div>`], [1142.5, 26, hResize()], [1176, 16, vResize()], [1485, 16, gridIc()],
    ];
    let cur = 803;
    return items.map(([c, w, t]) => {
      const ml = c - w / 2 - cur;
      cur = c + w / 2;
      return html`<div style="margin-left:${ml}px;flex:none">${t}</div>`;
    });
  }

  render() {
    const [ox, oy] = formOrigin;
    return html`
    <svg class="defs"><defs>${DEFS}</defs></svg>
    <div class="loadbar"><i></i></div>
    <div class="title"><div class="logo">${logo()}</div><div class="name">JavaApplication1 - Apache NetBeans IDE 12.5</div>
      <div class="win">${I(16, 2, svg`<rect width="16" height="1.400" fill="#222"/>`)}</div>
      <div class="win">${I(16, 16, svg`<rect x=".5" y="3.500" width="11" height="12" fill="#fff" stroke="#222"/><path d="M3.500 3.500v-3h12v12h-4" fill="none" stroke="#222"/>`)}</div>
      <div class="win last">${I(16, 16, svg`<path d="M.5.5l15 15M15.500.5l-15 15" stroke="#222"/>`)}</div>
    </div>
    <div class="menu">${menus.map(([m, w]) => html`<span style="width:${w}px">${m}</span>`)}
      <div class="grow"></div><div class="search">${searchIc()}<span>Search (Ctrl+I)</span></div></div>
    <div class="toolbar">${this.toolbar()}</div>
    <div class="main">
      <div class="left">
        <div class="panel h-proj">
          <div class="tabs"><div class="tab on wide">Projects ${xMark()}</div><div class="tab off">Files</div><div class="tab off">Services</div><div class="end">${minBar()}</div></div>
          <div class="body"><div class="tree">
            <svg class="guides" width="520" height="400" viewBox="5 149 520 400">
              ${guideP("M18 170V426M25 163h6M25 433h6")}
              ${guideP("M46 177V406M53 190h6M53 352h6M53 379h6M53 406h6")}
              ${guideP("M46 447V549M53 460h6M53 514h6M53 541h6")}
              ${guideP("M74 203V271M81 217h6M81 271h6")}
              ${guideP("M103 230V244H118M103 285V325H118M103 298H118")}
              ${guideP("M74 473V487H88")}
            </svg>
            ${projects.map((r) => this.row(r))}</div>${this.sb(-1, 321)}</div>
        </div>
        <div class="panel h-nav">
          <div class="tabs"><div class="tab on">Other Components - Navigator ${xMark()}</div><div class="end">${minBar()}</div></div>
          <div class="body"><div class="tree">
            <svg class="guides" width="520" height="400" viewBox="5 589 520 400">
              ${guideP("M18 590V596M25 603h6M46 616V984")}
              ${guideP(navigator.slice(1).map((_, i) => `M46 ${630 + i * 27}H61`).join(""))}
            </svg>
            ${navigator.map((r) => this.row(r))}</div>${this.sb(31, 239)}</div>
        </div>
      </div>
      <div class="right-wrap">
        <div class="upper">
          <div class="panel editor">
            <div class="tabs">
              <div class="etab start">Start Page ${xMark()}</div>
              <div class="etab act">${formFile()}<b>Form_Login.java</b>${xMark()}</div>
              <div class="ctrls">
                ${I(9, 14, svg`<path d="M8 0v14L0 7z" fill="#d0d0d0"/>`)}${I(9, 14, svg`<path d="M0 0v14l9-7z" fill="#d0d0d0"/>`)}
                ${I(14, 9, svg`<path d="M0 0h14L7 9z" fill="#444"/>`)}${I(15, 12, svg`<rect x=".5" y=".5" width="14" height="11" fill="none" stroke="#555"/><rect width="15" height="3" fill="#555"/>`)}
              </div>
            </div>
            <div class="ebody">
              <div class="sub">
                <div class="vtab src">Source</div>
                <div class="vtab des">Design</div>
                <div class="vtab his">History</div>
                <div class="vsep"></div>
                ${this.subbar()}
              </div>
              <div class="info">${bulb()}<div class="m">To change layout manager of a container use Set Layout submenu from its context menu.</div><div class="x">x</div></div>
              <div class="canvas"><div class="form">
                ${fLabels.map(([t, x, y]) => html`<div class="fl" style="left:${x - ox}px;top:${y - oy - 10}px">${t}</div>`)}
                ${fFields.map(([t, x, y, w, h]) => html`<div class="ff" style="left:${x - ox}px;top:${y - oy}px;width:${w}px;height:${h}px">${t}</div>`)}
                ${fButtons.map(([t, x, y]) => html`<div class="fb" style="left:${x - ox}px;top:${y - oy}px">${t}</div>`)}
              </div></div>
            </div>
          </div>
          <div class="rightcol">
            <div class="panel palette">
              <div class="tabs"><div class="tab on">Palette ${xMark()}</div><div class="end">${minBar()}</div></div>
              <div class="body"><div class="pal">
                <div class="pg">${palTop.map(([k, t]) => html`<div class="pi"><div class="ic">${pal[k]()}</div>${t}</div>`)}</div>
                <div class="sec">${I(14, 14, svg`<rect x=".5" y=".5" width="13" height="13" fill="#f2f2f2" stroke="#888"/><path d="M3 7h8" stroke="#3d4f86" stroke-width="2"/>`)}Swing Controls</div>
                <div class="pg">${palSwing.map(([k, t]) => html`<div class="pi"><div class="ic">${pal[k]()}</div>${t}</div>`)}</div>
              </div>${this.sb(18, 74)}</div>
            </div>
            <div class="panel props">
              <div class="tabs"><div class="tab on">Other Components - Properties ${xMark()}</div><div class="end">${minBar()}</div></div>
              <div class="body pb"><div class="noprop">&lt;No Properties&gt;</div>
                <div class="pfoot"><b>Other Components</b><div class="help">?</div></div></div>
            </div>
          </div>
        </div>
        <div class="panel output">
          <div class="tabs"><div class="tab on">Output ${xMark()}</div><div class="end">${minBar()}</div></div>
          <div class="obody">
            <div class="otabs">
              <div style="align-self:flex-start;margin-top:4px">${greenDouble()}</div>
              <div class="otab a">Debugger Console ${xMark()}</div>
              <div class="otab b">JavaApplication1 (run) ${xMark()}</div>
            </div>
            <div class="oin"><div class="pr">${I(14, 10, svg`<path d="M1 1l4.500 4L1 9M8 1l4.500 4L8 9" fill="none" stroke="#555" stroke-width="1.400"/>`)}</div><div class="box"><div class="spin">${I(10, 6, svg`<path d="M1 5l4-4 4 4" fill="none" stroke="#555" stroke-width="1.500"/>`)}${I(10, 6, svg`<path d="M1 1l4 4 4-4" fill="none" stroke="#555" stroke-width="1.500"/>`)}</div></div></div>
          </div>
        </div>
      </div>
    </div>
    <div class="status"><i class="s1"></i><i class="s2"></i><i></i></div>
    `;
  }
}
